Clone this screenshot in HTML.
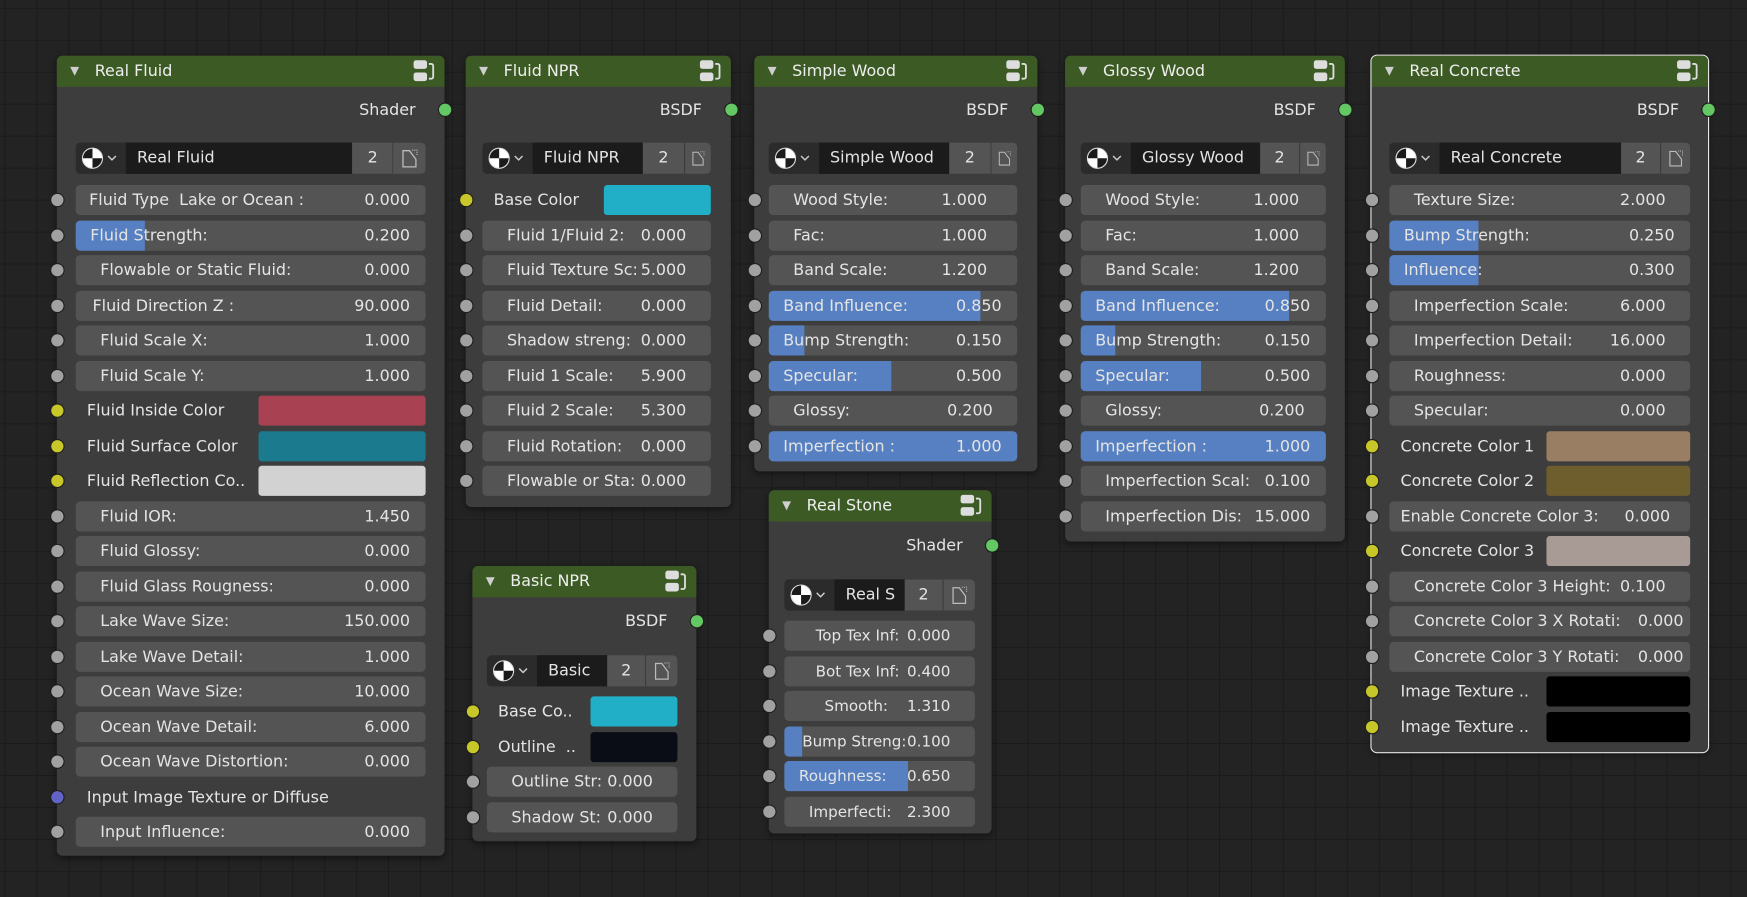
<!DOCTYPE html>
<html><head><meta charset="utf-8"><style>
html,body{margin:0;padding:0;width:1747px;height:897px;overflow:hidden;background:#232323}
#w{position:absolute;left:0;top:0;width:1568px;height:805px;transform:scale(1.11416,1.11429);transform-origin:0 0;
background-color:#232323;background-image:linear-gradient(#1b1b1b 1px,transparent 1px),linear-gradient(90deg,#1b1b1b 1px,transparent 1px);background-size:28.7px 28.7px;background-position:4px 7px;
font-family:"DejaVu Sans","Liberation Sans",sans-serif;color:#e4e4e4;font-size:14.3px}
.n{position:absolute;background:#3d3d3d;border-radius:5px;box-shadow:0 2px 6px rgba(0,0,0,.45)}
.n.sel{outline:1px solid #e8e8e8}
.hd{position:absolute;left:0;right:0;top:0;height:28px;background:#3c5a24;border-radius:5px 5px 0 0;line-height:29px;padding-left:34px;color:#eee}
.hd:before{content:"";position:absolute;left:12px;top:10px;border-left:4.5px solid transparent;border-right:4.5px solid transparent;border-top:8px solid #cfcfcf}
.hd svg{position:absolute;right:8px;top:3px}
.out{position:absolute;right:26px;top:40px;line-height:18px}
.os{position:absolute;right:-6px;top:43px;width:11px;height:11px;border-radius:50%;background:#63c763;box-shadow:0 0 0 1px #1e1e1e}
.mat{position:absolute;left:17px;right:17px;top:78px;height:28px;background:#2b2b2b;border-radius:4px}
.mat .ic{position:absolute;left:0;top:0;width:45px;height:28px}
.mat .nm{position:absolute;left:45px;top:0;height:28px;background:#1b1b1b;line-height:29px;padding-left:10px;box-sizing:border-box;overflow:hidden;white-space:nowrap}
.mat .num{position:absolute;top:0;height:28px;width:37px;background:#545454;text-align:center;line-height:29px}
.mat .bt{position:absolute;right:0;top:0;height:28px;width:30px;background:#545454;border-radius:0 4px 4px 0;border-left:1px solid #3d3d3d;box-sizing:border-box}
.rows{position:absolute;left:0;right:0;top:116px}
.r{position:relative;height:27px;margin:0 17px 4.5px 17px;border-radius:4px;line-height:28px;white-space:nowrap}
.f{background:#545454}
.r .l{position:absolute;left:22px;top:0}
.sl .l{left:13px}
.r .v{position:absolute;right:14px;top:0}
.r b{position:absolute;left:0;top:0;bottom:0;background:#5680c2;border-radius:4px 0 0 4px}
.r b.full{border-radius:4px}
.c{position:absolute;top:0;right:0;height:27px;border-radius:3px}
.s{position:absolute;left:-22px;top:8px;width:11px;height:11px;border-radius:50%;background:#a1a1a1;box-shadow:0 0 0 1px #1e1e1e}
.y{background:#c7c729}.p{background:#6363c7}
.nar .r .v{right:22px}
.stone .rows{font-size:13.6px}
</style></head><body><div id="w">

<svg width="0" height="0" style="position:absolute"><defs>
<symbol id="hi" viewBox="0 0 20 20"><rect x="2" y="1" width="11" height="7" rx="2" fill="#ddd"/><rect x="2" y="11" width="11" height="7" rx="2" fill="#ddd"/><path d="M14.5 4 h2 a1.5 1.5 0 0 1 1.5 1.5 v9 a1.5 1.5 0 0 1 -1.5 1.5 h-2" fill="none" stroke="#ddd" stroke-width="1.5"/></symbol>
<symbol id="mi" viewBox="0 0 45 28"><circle cx="15" cy="14" r="9" fill="#fff"/><path d="M15 5 A9 9 0 0 0 6 14 L15 14 Z M15 14 L24 14 A9 9 0 0 1 15 23 Z" fill="#1b1b1b"/><circle cx="15" cy="14" r="9" fill="none" stroke="#ddd" stroke-width="1"/><path d="M29 12 l3.5 3.5 l3.5 -3.5" fill="none" stroke="#ccc" stroke-width="1.3"/></symbol>
<symbol id="bi" viewBox="0 0 30 28"><path d="M9 7 h6 l6 8 v7 h-12 z" fill="none" stroke="#bbb" stroke-width="1.2"/><path d="M18 6 v1 M20 6 v1 M22 6 v1 M22 8 v1 M22 10 v1" stroke="#bbb" stroke-width="1"/></symbol>
</defs></svg>

<!-- Real Fluid -->
<div class="n" style="left:51px;top:50px;width:348px;height:718px">
<div class="hd">Real Fluid<svg width="22" height="22"><use href="#hi"/></svg></div>
<div class="out">Shader</div><div class="os"></div>
<div class="mat"><svg class="ic"><use href="#mi"/></svg><div class="nm" style="width:203px">Real Fluid</div><div class="num" style="left:248px">2</div><svg class="bt"><use href="#bi"/></svg></div>
<div class="rows">
<div class="r f"><i class="s"></i><span class="l" style="left:12px">Fluid Type&nbsp; Lake or Ocean :</span><span class="v">0.000</span></div>
<div class="r f sl"><b style="width:62px"></b><i class="s"></i><span class="l">Fluid Strength:</span><span class="v">0.200</span></div>
<div class="r f"><i class="s"></i><span class="l">Flowable or Static Fluid:</span><span class="v">0.000</span></div>
<div class="r f"><i class="s"></i><span class="l" style="left:15px">Fluid Direction Z :</span><span class="v">90.000</span></div>
<div class="r f"><i class="s"></i><span class="l">Fluid Scale X:</span><span class="v">1.000</span></div>
<div class="r f"><i class="s"></i><span class="l">Fluid Scale Y:</span><span class="v">1.000</span></div>
<div class="r"><i class="s y"></i><span class="l" style="left:10px">Fluid Inside Color</span><span class="c" style="left:164px;background:#a84252"></span></div>
<div class="r"><i class="s y"></i><span class="l" style="left:10px">Fluid Surface Color</span><span class="c" style="left:164px;background:#1b7a8d"></span></div>
<div class="r"><i class="s y"></i><span class="l" style="left:10px">Fluid Reflection Co..</span><span class="c" style="left:164px;background:#d2d2d2"></span></div>
<div class="r f"><i class="s"></i><span class="l">Fluid IOR:</span><span class="v">1.450</span></div>
<div class="r f"><i class="s"></i><span class="l">Fluid Glossy:</span><span class="v">0.000</span></div>
<div class="r f"><i class="s"></i><span class="l">Fluid Glass Rougness:</span><span class="v">0.000</span></div>
<div class="r f"><i class="s"></i><span class="l">Lake Wave Size:</span><span class="v">150.000</span></div>
<div class="r f"><i class="s"></i><span class="l">Lake Wave Detail:</span><span class="v">1.000</span></div>
<div class="r f"><i class="s"></i><span class="l">Ocean Wave Size:</span><span class="v">10.000</span></div>
<div class="r f"><i class="s"></i><span class="l">Ocean Wave Detail:</span><span class="v">6.000</span></div>
<div class="r f"><i class="s"></i><span class="l">Ocean Wave Distortion:</span><span class="v">0.000</span></div>
<div class="r"><i class="s p"></i><span class="l" style="left:10px">Input Image Texture or Diffuse</span></div>
<div class="r f"><i class="s"></i><span class="l">Input Influence:</span><span class="v">0.000</span></div>
</div></div>

<!-- Fluid NPR -->
<div class="n nar" style="left:418px;top:50px;width:238px;height:405px">
<div class="hd">Fluid NPR<svg width="22" height="22"><use href="#hi"/></svg></div>
<div class="out">BSDF</div><div class="os"></div>
<div class="mat" style="left:15px;right:18px"><svg class="ic"><use href="#mi"/></svg><div class="nm" style="width:99px">Fluid NPR</div><div class="num" style="left:144px">2</div><svg class="bt" style="width:24px"><use href="#bi"/></svg></div>
<div class="rows">
<div class="r" style="margin-left:15px;margin-right:18px"><i class="s y" style="left:-20px"></i><span class="l" style="left:10px">Base Color</span><span class="c" style="left:109px;background:#20afc6"></span></div>
<div class="r f" style="margin-left:15px;margin-right:18px"><i class="s" style="left:-20px"></i><span class="l">Fluid 1/Fluid 2:</span><span class="v">0.000</span></div>
<div class="r f" style="margin-left:15px;margin-right:18px"><i class="s" style="left:-20px"></i><span class="l">Fluid Texture Sc:</span><span class="v">5.000</span></div>
<div class="r f" style="margin-left:15px;margin-right:18px"><i class="s" style="left:-20px"></i><span class="l">Fluid Detail:</span><span class="v">0.000</span></div>
<div class="r f" style="margin-left:15px;margin-right:18px"><i class="s" style="left:-20px"></i><span class="l">Shadow streng:</span><span class="v">0.000</span></div>
<div class="r f" style="margin-left:15px;margin-right:18px"><i class="s" style="left:-20px"></i><span class="l">Fluid 1 Scale:</span><span class="v">5.900</span></div>
<div class="r f" style="margin-left:15px;margin-right:18px"><i class="s" style="left:-20px"></i><span class="l">Fluid 2 Scale:</span><span class="v">5.300</span></div>
<div class="r f" style="margin-left:15px;margin-right:18px"><i class="s" style="left:-20px"></i><span class="l">Fluid Rotation:</span><span class="v">0.000</span></div>
<div class="r f" style="margin-left:15px;margin-right:18px"><i class="s" style="left:-20px"></i><span class="l">Flowable or Sta:</span><span class="v">0.000</span></div>
</div></div>

<!-- Basic NPR -->
<div class="n nar" style="left:424px;top:508px;width:201px;height:247px">
<div class="hd">Basic NPR<svg width="22" height="22"><use href="#hi"/></svg></div>
<div class="out" style="top:41px">BSDF</div><div class="os" style="top:44px"></div>
<div class="mat" style="left:13px;right:17px;top:80px"><svg class="ic"><use href="#mi"/></svg><div class="nm" style="width:63px">Basic</div><div class="num" style="left:108px;width:34px">2</div><svg class="bt" style="width:29px"><use href="#bi"/></svg></div>
<div class="rows" style="top:117px">
<div class="r" style="margin-left:13px"><i class="s y" style="left:-18px"></i><span class="l" style="left:10px">Base Co..</span><span class="c" style="left:93px;background:#20afc6"></span></div>
<div class="r" style="margin-left:13px"><i class="s y" style="left:-18px"></i><span class="l" style="left:10px">Outline &nbsp;..</span><span class="c" style="left:93px;background:#0a0d16"></span></div>
<div class="r f" style="margin-left:13px"><i class="s" style="left:-18px"></i><span class="l">Outline Str:</span><span class="v">0.000</span></div>
<div class="r f" style="margin-left:13px"><i class="s" style="left:-18px"></i><span class="l">Shadow St:</span><span class="v">0.000</span></div>
</div></div>

<!-- Simple Wood -->
<div class="n" style="left:677px;top:50px;width:254px;height:373px">
<div class="hd">Simple Wood<svg width="22" height="22"><use href="#hi"/></svg></div>
<div class="out">BSDF</div><div class="os"></div>
<div class="mat" style="left:13px;right:18px"><svg class="ic"><use href="#mi"/></svg><div class="nm" style="width:117px">Simple Wood</div><div class="num" style="left:162px">2</div><svg class="bt" style="width:24px"><use href="#bi"/></svg></div>
<div class="rows">
<div class="r f" style="margin-left:13px;margin-right:18px"><i class="s" style="left:-18px"></i><span class="l">Wood Style:</span><span class="v" style="right:27px">1.000</span></div>
<div class="r f" style="margin-left:13px;margin-right:18px"><i class="s" style="left:-18px"></i><span class="l">Fac:</span><span class="v" style="right:27px">1.000</span></div>
<div class="r f" style="margin-left:13px;margin-right:18px"><i class="s" style="left:-18px"></i><span class="l">Band Scale:</span><span class="v" style="right:27px">1.200</span></div>
<div class="r f sl" style="margin-left:13px;margin-right:18px"><b style="width:190px"></b><i class="s" style="left:-18px"></i><span class="l">Band Influence:</span><span class="v">0.850</span></div>
<div class="r f sl" style="margin-left:13px;margin-right:18px"><b style="width:32px"></b><i class="s" style="left:-18px"></i><span class="l">Bump Strength:</span><span class="v">0.150</span></div>
<div class="r f sl" style="margin-left:13px;margin-right:18px"><b style="width:110px"></b><i class="s" style="left:-18px"></i><span class="l">Specular:</span><span class="v">0.500</span></div>
<div class="r f" style="margin-left:13px;margin-right:18px"><i class="s" style="left:-18px"></i><span class="l">Glossy:</span><span class="v" style="right:22px">0.200</span></div>
<div class="r f sl" style="margin-left:13px;margin-right:18px"><b class="full" style="width:100%"></b><i class="s" style="left:-18px"></i><span class="l">Imperfection :</span><span class="v">1.000</span></div>
</div></div>

<!-- Real Stone -->
<div class="n nar stone" style="left:690px;top:440px;width:200px;height:308px">
<div class="hd">Real Stone<svg width="22" height="22"><use href="#hi"/></svg></div>
<div class="out" style="top:41px">Shader</div><div class="os" style="top:44px"></div>
<div class="mat" style="left:14px;right:15px;top:80px"><svg class="ic"><use href="#mi"/></svg><div class="nm" style="width:63px">Real S</div><div class="num" style="left:108px;width:34px">2</div><svg class="bt" style="width:29px"><use href="#bi"/></svg></div>
<div class="rows" style="top:117px">
<div class="r f" style="margin-left:14px;margin-right:15px"><i class="s" style="left:-19px"></i><span class="l" style="left:28px">Top Tex Inf:</span><span class="v">0.000</span></div>
<div class="r f" style="margin-left:14px;margin-right:15px"><i class="s" style="left:-19px"></i><span class="l" style="left:28px">Bot Tex Inf:</span><span class="v">0.400</span></div>
<div class="r f" style="margin-left:14px;margin-right:15px"><i class="s" style="left:-19px"></i><span class="l" style="left:36px">Smooth:</span><span class="v">1.310</span></div>
<div class="r f sl" style="margin-left:14px;margin-right:15px"><b style="width:16px"></b><i class="s" style="left:-19px"></i><span class="l" style="left:16px">Bump Streng:</span><span class="v">0.100</span></div>
<div class="r f sl" style="margin-left:14px;margin-right:15px"><b style="width:111px"></b><i class="s" style="left:-19px"></i><span class="l">Roughness:</span><span class="v">0.650</span></div>
<div class="r f" style="margin-left:14px;margin-right:15px"><i class="s" style="left:-19px"></i><span class="l">Imperfecti:</span><span class="v">2.300</span></div>
</div></div>

<!-- Glossy Wood -->
<div class="n" style="left:956px;top:50px;width:251px;height:436px">
<div class="hd">Glossy Wood<svg width="22" height="22"><use href="#hi"/></svg></div>
<div class="out">BSDF</div><div class="os"></div>
<div class="mat" style="left:14px;right:17px"><svg class="ic"><use href="#mi"/></svg><div class="nm" style="width:116px">Glossy Wood</div><div class="num" style="left:161px;width:35px">2</div><svg class="bt" style="width:24px"><use href="#bi"/></svg></div>
<div class="rows">
<div class="r f" style="margin-left:14px"><i class="s" style="left:-19px"></i><span class="l">Wood Style:</span><span class="v" style="right:24px">1.000</span></div>
<div class="r f" style="margin-left:14px"><i class="s" style="left:-19px"></i><span class="l">Fac:</span><span class="v" style="right:24px">1.000</span></div>
<div class="r f" style="margin-left:14px"><i class="s" style="left:-19px"></i><span class="l">Band Scale:</span><span class="v" style="right:24px">1.200</span></div>
<div class="r f sl" style="margin-left:14px"><b style="width:187px"></b><i class="s" style="left:-19px"></i><span class="l">Band Influence:</span><span class="v">0.850</span></div>
<div class="r f sl" style="margin-left:14px"><b style="width:31px"></b><i class="s" style="left:-19px"></i><span class="l">Bump Strength:</span><span class="v">0.150</span></div>
<div class="r f sl" style="margin-left:14px"><b style="width:108px"></b><i class="s" style="left:-19px"></i><span class="l">Specular:</span><span class="v">0.500</span></div>
<div class="r f" style="margin-left:14px"><i class="s" style="left:-19px"></i><span class="l">Glossy:</span><span class="v" style="right:19px">0.200</span></div>
<div class="r f sl" style="margin-left:14px"><b class="full" style="width:100%"></b><i class="s" style="left:-19px"></i><span class="l">Imperfection :</span><span class="v">1.000</span></div>
<div class="r f" style="margin-left:14px"><i class="s" style="left:-19px"></i><span class="l">Imperfection Scal:</span><span class="v">0.100</span></div>
<div class="r f" style="margin-left:14px"><i class="s" style="left:-19px"></i><span class="l">Imperfection Dis:</span><span class="v">15.000</span></div>
</div></div>

<!-- Real Concrete -->
<div class="n sel" style="left:1231px;top:50px;width:302px;height:625px">
<div class="hd">Real Concrete<svg width="22" height="22"><use href="#hi"/></svg></div>
<div class="out">BSDF</div><div class="os"></div>
<div class="mat" style="left:16px;right:16px"><svg class="ic"><use href="#mi"/></svg><div class="nm" style="width:163px">Real Concrete</div><div class="num" style="left:208px;width:35px">2</div><svg class="bt" style="width:27px"><use href="#bi"/></svg></div>
<div class="rows">
<div class="r f" style="margin:0 16px 4.5px"><i class="s" style="left:-21px"></i><span class="l">Texture Size:</span><span class="v" style="right:22px">2.000</span></div>
<div class="r f sl" style="margin:0 16px 4.5px"><b style="width:80px"></b><i class="s" style="left:-21px"></i><span class="l">Bump Strength:</span><span class="v">0.250</span></div>
<div class="r f sl" style="margin:0 16px 4.5px"><b style="width:80px"></b><i class="s" style="left:-21px"></i><span class="l">Influence:</span><span class="v">0.300</span></div>
<div class="r f" style="margin:0 16px 4.5px"><i class="s" style="left:-21px"></i><span class="l">Imperfection Scale:</span><span class="v" style="right:22px">6.000</span></div>
<div class="r f" style="margin:0 16px 4.5px"><i class="s" style="left:-21px"></i><span class="l">Imperfection Detail:</span><span class="v" style="right:22px">16.000</span></div>
<div class="r f" style="margin:0 16px 4.5px"><i class="s" style="left:-21px"></i><span class="l">Roughness:</span><span class="v" style="right:22px">0.000</span></div>
<div class="r f" style="margin:0 16px 4.5px"><i class="s" style="left:-21px"></i><span class="l">Specular:</span><span class="v" style="right:22px">0.000</span></div>
<div class="r" style="margin:0 16px 4.5px"><i class="s y" style="left:-21px"></i><span class="l" style="left:10px">Concrete Color 1</span><span class="c" style="left:141px;background:#9a7e63"></span></div>
<div class="r" style="margin:0 16px 4.5px"><i class="s y" style="left:-21px"></i><span class="l" style="left:10px">Concrete Color 2</span><span class="c" style="left:141px;background:#6e5e2e"></span></div>
<div class="r f" style="margin:0 16px 4.5px"><i class="s" style="left:-21px"></i><span class="l" style="left:10px">Enable Concrete Color 3:</span><span class="v" style="right:18px">0.000</span></div>
<div class="r" style="margin:0 16px 4.5px"><i class="s y" style="left:-21px"></i><span class="l" style="left:10px">Concrete Color 3</span><span class="c" style="left:141px;background:#a89a94"></span></div>
<div class="r f" style="margin:0 16px 4.5px"><i class="s" style="left:-21px"></i><span class="l">Concrete Color 3 Height:</span><span class="v" style="right:22px">0.100</span></div>
<div class="r f" style="margin:0 16px 4.5px"><i class="s" style="left:-21px"></i><span class="l">Concrete Color 3 X Rotati:</span><span class="v" style="right:6px">0.000</span></div>
<div class="r f" style="margin:0 16px 4.5px"><i class="s" style="left:-21px"></i><span class="l">Concrete Color 3 Y Rotati:</span><span class="v" style="right:6px">0.000</span></div>
<div class="r" style="margin:0 16px 4.5px"><i class="s y" style="left:-21px"></i><span class="l" style="left:10px">Image Texture ..</span><span class="c" style="left:141px;background:#000"></span></div>
<div class="r" style="margin:0 16px 4.5px"><i class="s y" style="left:-21px"></i><span class="l" style="left:10px">Image Texture ..</span><span class="c" style="left:141px;background:#000"></span></div>
</div></div>

</div></body></html>
